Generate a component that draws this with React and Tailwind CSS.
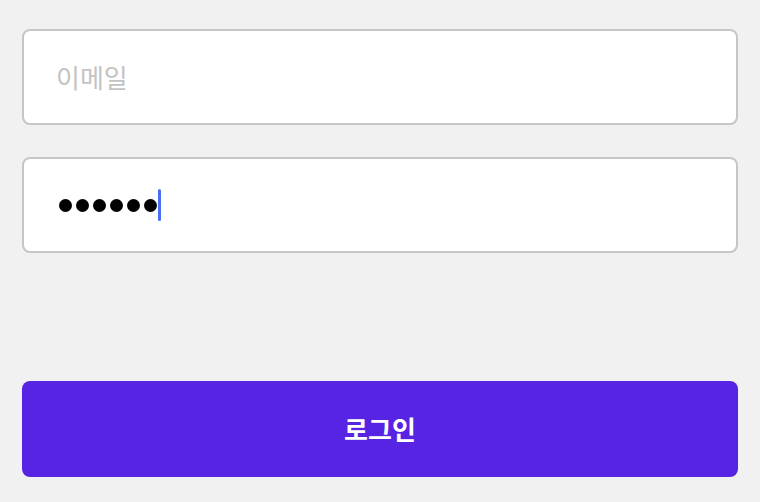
import React from 'react';

const font = { fontFamily: '"Noto Sans CJK KR", "Noto Sans", sans-serif' };

const Field = ({ children }) => (
    <div className="h-[96px] w-full rounded-[8px] border-2 border-[#c6c6c6] bg-white flex items-center pl-[32px]">
        {children}
    </div>
);

const App = () => {
    return (
        <div className="w-[760px] h-[502px] bg-[#f1f1f1] px-[22px] pt-[29px] flex flex-col" style={font}>
            <div className="flex flex-col gap-[32px]">
                <Field>
                    <span className="text-[26px] text-[#c3c3c3] leading-none">이메일</span>
                </Field>
                <Field>
                    <div className="flex items-center gap-[4px] pl-[3px]">
                        {[0, 1, 2, 3, 4, 5].map((i) => (
                            <span key={i} className="w-[13px] h-[13px] rounded-full bg-black" />
                        ))}
                        <span className="w-[3px] h-[32px] rounded-full bg-[#4b6ef5] -ml-[3px]" />
                    </div>
                </Field>
            </div>
            <button className="mt-[128px] h-[96px] w-full rounded-[8px] bg-[#5724e4] text-white text-[26px] font-bold pb-[2px]">
                로그인
            </button>
        </div>
    );
};

export default App;
